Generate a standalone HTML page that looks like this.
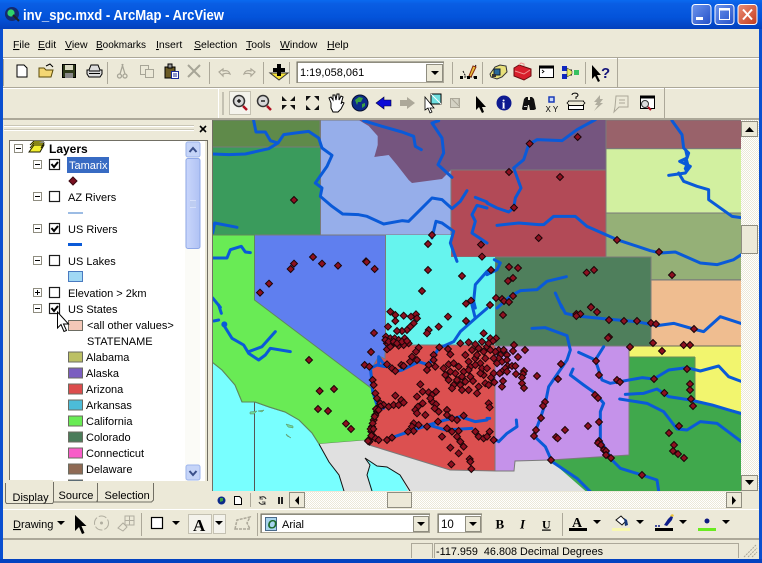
<!DOCTYPE html>
<html><head><meta charset="utf-8"><style>
html,body{margin:0;padding:0;width:762px;height:563px;overflow:hidden;background:#ece9d8}
svg{display:block;position:absolute;left:0;top:0}
text{font-family:"Liberation Sans",sans-serif;font-size:11px;fill:#000}
.mn{font-size:10.500px}
.r{fill:none;stroke:#0a5ad8;stroke-width:9;stroke-linejoin:round;stroke-linecap:round}
.p{fill:none;stroke:none;marker-start:url(#m);marker-mid:url(#m);marker-end:url(#m)}
.c{fill:none;stroke:#000;stroke-width:1.6}
.g{fill:#b0ad9f}
</style></head><body>
<svg width="762" height="563" viewBox="0 0 762 563">
<defs>
<linearGradient id="tb" x1="0" y1="0" x2="0" y2="1"><stop offset="0" stop-color="#0a6af0"/><stop offset=".12" stop-color="#0a5ee4"/><stop offset=".6" stop-color="#0353da"/><stop offset="1" stop-color="#0340bc"/></linearGradient>
<linearGradient id="bb" x1="0" y1="0" x2="1" y2="1"><stop offset="0" stop-color="#6f95ec"/><stop offset="1" stop-color="#2350c8"/></linearGradient>
<linearGradient id="xb" x1="0" y1="0" x2="1" y2="1"><stop offset="0" stop-color="#ec9078"/><stop offset="1" stop-color="#c23a1c"/></linearGradient>
<linearGradient id="sb" x1="0" y1="0" x2="1" y2="0"><stop offset="0" stop-color="#c9d6fb"/><stop offset="1" stop-color="#b0c2f4"/></linearGradient>
<pattern id="dit" width="2" height="2" patternUnits="userSpaceOnUse"><rect width="2" height="2" fill="#fff"/><rect width="1" height="1" fill="#ece9d8"/><rect x="1" y="1" width="1" height="1" fill="#ece9d8"/></pattern>
<marker id="m" markerWidth="30" markerHeight="30" refX="15" refY="15" markerUnits="userSpaceOnUse"><path d="M15 4.500L25.500 15 15 25.500 4.500 15Z" fill="#8d1020" stroke="#1a0508" stroke-width="3"/></marker>
<clipPath id="mc"><rect x="212" y="120" width="529" height="371"/></clipPath>
<clipPath id="tc"><rect x="10" y="141" width="175" height="340"/></clipPath>
</defs>

<!-- window frame -->
<rect width="762" height="563" fill="#0a4fd0"/>
<rect x="3" y="29" width="756" height="530" fill="#ece9d8"/>
<rect width="762" height="29" fill="url(#tb)"/>
<rect y="559" width="762" height="4" fill="#0443c0"/>
<text x="23" y="20" textLength="201" lengthAdjust="spacingAndGlyphs" style="font-size:14.5px;font-weight:bold;fill:#fff">inv_spc.mxd - ArcMap - ArcView</text>
<circle cx="12" cy="14" r="7" fill="#132a70"/><circle cx="11" cy="13" r="3.600" fill="#2fd36a"/><path d="M13 15l6 6" stroke="#222" stroke-width="2"/>
<rect x="692" y="4.500" width="19" height="20" rx="3" fill="url(#bb)" stroke="#fff"/><rect x="696" y="17" width="7" height="3" fill="#fff"/>
<rect x="715" y="4.500" width="19" height="20" rx="3" fill="url(#bb)" stroke="#fff"/><rect x="719.500" y="9.500" width="10" height="10" fill="none" stroke="#fff"/><rect x="719" y="8" width="11" height="2.500" fill="#fff"/>
<rect x="738" y="4.500" width="19" height="20" rx="3" fill="url(#xb)" stroke="#fff"/><path d="M743 9.500l9 10M752 9.500l-9 10" stroke="#fff" stroke-width="2"/>

<!-- menu -->
<g>
<text class="mn" x="13" y="48"><tspan text-decoration="underline">F</tspan>ile</text>
<text class="mn" x="38" y="48"><tspan text-decoration="underline">E</tspan>dit</text>
<text class="mn" x="65" y="48"><tspan text-decoration="underline">V</tspan>iew</text>
<text class="mn" x="96" y="48" textLength="50" lengthAdjust="spacingAndGlyphs"><tspan text-decoration="underline">B</tspan>ookmarks</text>
<text class="mn" x="156" y="48"><tspan text-decoration="underline">I</tspan>nsert</text>
<text class="mn" x="194" y="48"><tspan text-decoration="underline">S</tspan>election</text>
<text class="mn" x="246" y="48"><tspan text-decoration="underline">T</tspan>ools</text>
<text class="mn" x="280" y="48"><tspan text-decoration="underline">W</tspan>indow</text>
<text class="mn" x="327" y="48"><tspan text-decoration="underline">H</tspan>elp</text>
</g>
<rect x="3" y="57" width="756" height="1" fill="#aca899"/><rect x="3" y="58" width="756" height="1" fill="#fff"/>
<rect x="3" y="87" width="756" height="1" fill="#aca899"/><rect x="3" y="88" width="756" height="1" fill="#fff"/>
<rect x="617" y="58" width="1" height="30" fill="#aca899"/>
<rect x="218" y="89" width="1" height="29" fill="#fff"/>
<rect x="664" y="88" width="1" height="30" fill="#aca899"/>
<rect x="3" y="118" width="756" height="2" fill="#aca899"/>
<rect x="3" y="59" width="1" height="27" fill="#aca899"/><rect x="222" y="92" width="2" height="23" fill="#c4c1b2"/>

<!-- main toolbar icons -->
<path d="M17 65h7l3 3v9H17z" fill="#fff" stroke="#000"/>
<path d="M39 76V68h5l2 2h7l-2 7H39z" fill="#f4d774" stroke="#5a4a08"/><path d="M46 66l4-2 3 3" fill="none" stroke="#000"/>
<rect x="62.500" y="64.500" width="13" height="13" fill="#2e3a1a" stroke="#000"/><rect x="65" y="65" width="8" height="5" fill="#d8d8c0"/><rect x="65" y="73" width="8" height="5" fill="#888"/>
<path d="M87 74v-4h2l2-5h7l2 5h2v4l-2 3H89z" fill="#ddd" stroke="#000"/><path d="M89 71h11M89 73.500h11" stroke="#000"/>
<g fill="none" stroke="#a7a597" stroke-width="1.300"><circle cx="119.500" cy="76" r="2"/><circle cx="125" cy="76" r="2"/><path d="M120 74l3-10M125 74l-3-10"/></g>
<g fill="#ece9d8" stroke="#a7a597"><rect x="140.500" y="65.500" width="8" height="9"/><rect x="145.500" y="69.500" width="8" height="8"/></g>
<rect x="165" y="67" width="10" height="11" fill="#6a5a24" stroke="#000"/><rect x="168" y="64" width="4" height="4" fill="#999" stroke="#000"/><rect x="171.500" y="71.500" width="7" height="7" fill="#fff" stroke="#1a2a9a"/><path d="M173 74h4M173 76h4" stroke="#1a2a9a"/>
<path d="M188 65l12 12M200 65l-12 12" stroke="#a7a597" stroke-width="2"/>
<path d="M219 72l4-3v2c4-1 6 0 7 3-2-1-4-1-7 0v2z" fill="none" stroke="#aca899" stroke-width="1.200"/>
<path d="M255 72l-4-3v2c-4-1-6 0-7 3 2-1 4-1 7 0v2z" fill="none" stroke="#aca899" stroke-width="1.200"/>
<rect x="263" y="62" width="1" height="22" fill="#aca899"/><rect x="209" y="62" width="1" height="22" fill="#aca899"/><rect x="107" y="62" width="1" height="22" fill="#aca899"/><rect x="289" y="62" width="1" height="22" fill="#aca899"/>
<path d="M270 73h18l-9 7z" fill="#f4e23a" stroke="#333"/><path d="M277 64h4v4h4v4h-4v4h-4v-4h-4v-4h4z" fill="#000"/>
<!-- scale box -->
<rect x="297.500" y="62.500" width="146" height="20" fill="#fff" stroke="#aca899"/><path d="M297 83V62h147" fill="none" stroke="#716f64"/>
<text x="300" y="76">1:19,058,061</text>
<rect x="426.500" y="64.500" width="16" height="17" fill="#ece9d8" stroke="#8f8d80"/><path d="M431 71h8l-4 4z" fill="#000"/>
<rect x="452" y="62" width="1" height="22" fill="#aca899"/><rect x="482" y="62" width="1" height="22" fill="#aca899"/><rect x="585" y="62" width="1" height="22" fill="#aca899"/>
<path d="M461 77h14M463 71l3 6M476 65l-5 9" stroke="#111" stroke-dasharray="2 1" fill="none"/><path d="M473 66l3 1-5 10-2-1z" fill="#e9c23a" stroke="#8a2a10"/><rect x="460" y="76" width="3" height="3"/><rect x="467" y="76" width="3" height="3"/><rect x="474" y="76" width="3" height="3"/>
<path d="M490 74l5-7 5-2 6 1 1 6-5 5-5 2-6-2z" fill="#e8e07a" stroke="#333"/><rect x="494" y="69" width="6" height="6" fill="#2a6a9a" stroke="#123"/><rect x="492" y="74" width="4" height="3" fill="#333"/>
<path d="M514 68l5-3 3 1 9 3v7l-7 4-10-4z" fill="#d81e2c" stroke="#6a0d10"/><path d="M519 65l2-2 3 1v2M515 71l9 3 6-4" stroke="#f09090" fill="none"/>
<rect x="539.500" y="66.500" width="14" height="11" fill="#fff" stroke="#000"/><rect x="539" y="65.500" width="15" height="3" fill="#000"/><path d="M542 70l2 1.500-2 1.500" stroke="#000" fill="none" stroke-width=".8"/>
<path d="M566 70h6M566 75h6" stroke="#222"/><rect x="562" y="66" width="5" height="5" fill="#1028c0"/><rect x="562" y="74" width="5" height="5" fill="#1028c0"/><path d="M567 68l5 3v3l-5 3z" fill="#eeee60" stroke="#222" stroke-width=".5"/><rect x="574" y="70" width="5" height="5" fill="#38c060"/>
<path d="M592 65v14l3-3 3 6 2-1-3-6 4 0z" fill="#000"/><text x="601" y="78" style="font-size:15px;font-weight:bold;fill:#14147a">?</text>

<!-- second toolbar -->
<rect x="229.500" y="91.500" width="21" height="23" fill="#f4f3ec" stroke="#c4c1b2"/>
<g fill="#d8d8d8" stroke="#333" stroke-width="1.500"><circle cx="239" cy="101" r="5.500"/><circle cx="263" cy="101" r="5.500"/></g>
<path d="M237 101h4M239 99v4M261 101h4" stroke="#000" stroke-width="1.200"/>
<path d="M243 106l4 4M267 106l4 4" stroke="#b01020" stroke-width="2.500"/>
<g fill="#111"><path d="M282 96l5 5h-5zM295 96l-5 5h5zM282 110l5-5h-5zM295 110l-5-5h5z"/><path d="M306 96h5l-5 5zM319 96h-5l5 5zM306 110h5l-5-5zM319 110h-5l5-5z"/></g>
<path d="M331 103l-2-5 2-1 2 3 0-5h2l1 5 1-6 2 0 0 6 2-4 2 1-2 7 1-2 2 1-3 6-3 3h-5l-2-4z" fill="#fff" stroke="#000"/>
<circle cx="360" cy="103" r="8" fill="#0c2a8a" stroke="#061030"/><path d="M355 100l4-3 4 1-2 4-3 0-1 3zM362 104l3-1 0 3-3 2z" fill="#39a044"/>
<path d="M376 103l8-6v3h7v6h-7v3z" fill="#0a0ad8" stroke="#06063a" stroke-width=".6"/>
<path d="M415 103l-8-6v3h-7v6h7v3z" fill="#aca899"/>
<rect x="431" y="94" width="10" height="10" fill="#6fe0e0" stroke="#000"/><path d="M431 94l10 10" stroke="#fff"/><path d="M425 97v13l3-2 2 5 2-1-2-4h4z" fill="#fff" stroke="#000" stroke-width=".8"/>
<rect x="450.500" y="98.500" width="9" height="9" fill="#d4d2c4" stroke="#aca899"/><path d="M452 99l7 7M459 99v5" stroke="#aca899"/>
<path d="M476 96v14l3-3 3 6 2-1-2-5h4z" fill="#000"/>
<circle cx="504" cy="103" r="7.500" fill="#0e1a90"/><text x="501.800" y="108.500" style="font-size:13px;font-weight:bold;fill:#fff;font-family:'Liberation Serif',serif">i</text>
<path d="M522 109l2-10 2-2h2v3h2v-3h2l2 2 2 10-2 1h-4l-1-5-1 0-1 5h-4z" fill="#111"/><rect x="524" y="106" width="3" height="1" fill="#ccc"/>
<rect x="549" y="97" width="5" height="5" fill="#c8d8f8" stroke="#1a3ab8" stroke-width="1.500"/><text x="545.500" y="112" style="font-size:8px;letter-spacing:2px">XY</text>
<path d="M568 104h16M569 104l-2 2 2 2M583 104l2 2-2 2" fill="none" stroke="#000" stroke-width=".8" transform="translate(0,-3)"/><rect x="568.500" y="105.500" width="15" height="4" fill="#fff" stroke="#000"/><path d="M572 95a3 2 0 1 1 4 2l0 2" fill="none" stroke="#000"/>
<path d="M600 95l-6 7 3 0-2 3 3 0-4 6 9-8-3 0 3-4-3 0z" fill="#b0ad9f"/>
<path d="M616 96h12v11h-9l-5 5 1-5z" fill="#ece9d8" stroke="#aca899"/><path d="M619 100h6M619 103h6" stroke="#aca899"/>
<rect x="640.500" y="96.500" width="14" height="12" fill="#fff" stroke="#000"/><rect x="640" y="95.500" width="15" height="3" fill="#000"/><circle cx="645" cy="104" r="3.500" fill="#ddd" stroke="#333"/><path d="M648 107l3 3" stroke="#b01020" stroke-width="2"/>

<!-- MAP -->
<g clip-path="url(#mc)">
<rect x="212" y="120" width="529" height="371" fill="#78ffff"/>
<g stroke="#7a7a7a" stroke-width="1">
<rect x="212" y="120" width="108" height="27" fill="#5f8a4a"/>
<rect x="212" y="147" width="108.500" height="88" fill="#3a9b5c"/>
<rect x="320.500" y="120" width="131" height="115" fill="#96aeea"/>
<path d="M358.700 120L368.700 126 377.700 136V145L374.300 157 388.700 155 397 165 408.700 180 412 183 442 179 451 170H606V120Z" fill="#75557f" stroke="none"/>
<rect x="606" y="120" width="136" height="28.700" fill="#99626a"/>
<rect x="606" y="148.700" width="136" height="64.300" fill="#d2f0a0"/>
<path d="M606 213H742V279.700H651V257H606Z" fill="#95b077"/>
<rect x="451" y="170" width="155" height="87" fill="#b24a57"/>
<rect x="495" y="257" width="156" height="89" fill="#4f7f5c"/>
<path d="M385.500 235H451V257H495V346H385.500Z" fill="#66f4ee" stroke="none"/>
<path d="M254.500 235H385.500V345L385 359 379 356 372 368 371 388 258 305 254.500 300Z" fill="#5f7fef"/>
<path d="M212 235H254.500V300L371 388 377 405 369 440 319 444 312 433 299 420 285 412 269 407 255 402 242 402 235 385 222 370 212 362Z" fill="#69eb55" stroke="#5f8a5a"/>
<path d="M651 280H742V346H651Z" fill="#efbd90"/>
<path d="M319 444L369 440 370 445 450 470 495 471H514L515 461 550 460 590 495H344L339 475 329 462Z" fill="#e0e0e0" stroke="none"/>
<path d="M385.500 345H495V471L450 470 369 445 377 405 371 388 372 368 379 356 385 359Z" fill="#dc5050"/>
<path d="M629 346H742V412L695 400V357H629Z" fill="#f2f56e" stroke="none"/>
<path d="M629 357H695V400L742 412V495H590L550 460 629 455Z" fill="#40a84c" stroke="none"/>
<path d="M695 357V400M629 357H695" fill="none" stroke="#6a8a5a"/>
<path d="M495 346H629V455L550 460 515 461 514 471H495Z" fill="#c592ea"/>
<path d="M742 346H629" stroke="#6a6a5a" fill="none"/>
</g>
<path d="M365 458L370 465 367 475 372 495H410L400 475 387 467 377 466Z" fill="#78ffff" stroke="none"/>
<g fill="none" stroke="#111" stroke-width="1"><path d="M319 444L329 462 339 475 344 491"/><path d="M372 491L367 475 370 465 365 458 377 466 387 467 400 475 410 491"/></g>
<path d="M254.500 402V491" stroke="#555" stroke-width="1"/>
<path d="M212 362L222 370 235 385 242 402 255 402 269 407 285 412 299 420 312 433 319 444" fill="none" stroke="#5f8a5a"/>
<g fill="#6ad89a" stroke="#5f8a5a" stroke-width=".5"><path d="M250 412l7-1-3 3-4 0zM258 411l6-1-2 2zM286 424l7 2 0 2-5-1zM286 434l5 4-4-2z"/></g>

<g transform="translate(212,118) scale(.33333)" >
<path class="r" d="M125,8 L132,42 L160,42 L175,68 L198,75 L215,50 L250,45 L290,40 L320,60 L330,90 L360,112 L345,145 L310,195 L330,210 L325,235 L360,265 L392,288 L440,290 L465,295 L515,318 L570,308 L590,310 L625,275 L660,240 L690,245 L720,272 L745,250 L765,218"/>
<path class="r" d="M2,108 L50,110 L100,108 L170,92 L198,75M2,345 L8,315 L75,328M2,420 L45,420 L55,395 L88,385 L100,402 L115,404M2,540 L25,568"/>
<path class="r" d="M455,8 L510,25 L570,42 L605,55 L610,85 L628,95M680,8 L660,15 L690,60 L695,105 L678,140 L720,178M790,238 L825,252M825,270 L795,262 L780,290 L790,310 L780,345 L825,375M660,360 L672,310 L690,315 L725,340 L715,375 L735,430M825,460 L790,500 L785,550 L790,570"/>
<polyline class="p" points="246,246 303,417 246,437 236,453 330,437 378,443 462,430 464,432 488,453 171,497 144,524 660,351 648,378 648,456 750,474 630,519 777,548 762,557 807,380 810,416"/>
</g>
<g transform="translate(487,118) scale(.33333)">
<path class="r" d="M325,5 L270,35 L225,68 L150,65 L125,80 L110,125 L80,150 L102,210 L85,240 L80,270 L65,282 L30,270 L0,255M30,322 L95,315 L155,320 L170,320 L200,295 L265,295 L300,325 L390,365 L490,398 L520,405 L565,402 L640,435 L690,440 L740,425 L770,405"/>
<path class="r" d="M555,8 L585,50 L590,90 L605,105 L600,120 L578,130 L610,145 L595,165 L545,172M575,165 L590,190 L630,205 L665,215 L665,245 L735,295 L770,300M238,476 L180,490 L150,515 L100,518 L70,535 L30,570M205,525 L225,570M22,425 L40,435 L30,455 L0,470"/>
<path d="M592 98l12 8-2 16 6 22-12 20-6-12 6-14-8-12 8-10z" fill="#0a5ad8"/>
<polyline class="p" points="272,57 128,77 66,162 219,177 81,269 155,360 390,366 516,402 555,471 12,456 66,447 93,450 78,480 63,489 299,464 321,456 78,534 27,540 45,543 51,549 66,552 9,561 312,567"/>
</g>
<g transform="translate(212,305) scale(.33333)">
<path class="r" d="M20,0 L28,25M5,48 L20,45M35,60 L60,100 L95,120 L110,145 L140,165 L160,150 L175,130 L235,140M110,140 L150,125 L190,80M478,215 L475,190 L495,180 L520,185 L500,155 L500,175M478,215 L482,260 L495,300 L515,310"/>
<path class="r" d="M825,10 L790,40 L745,80 L725,110 L680,130 L650,180 L620,170 L570,195 L550,200 L520,175M520,405 L590,380 L650,360 L700,375 L780,370M650,360 L700,345 L745,335 L790,350 L825,345M780,0 L790,40" />
<path d="M28 58a9 9 0 1 0 18 0a9 9 0 1 0-18 0" fill="#0a5ad8"/>
<polyline class="p" points="535,20 550,30 575,32 597,35 612,28 615,40 550,48 528,65 605,55 595,65 585,75 570,78 555,78 708,35 680,65 650,75 645,85 762,48 486,84 815,85 522,95 535,100 548,100 560,105 578,100 590,115 525,115 540,120 560,122 575,120 525,133 535,125 520,105 530,110 545,110 555,115 570,110 585,108 620,128 612,140 600,155 615,165 682,127 708,132 715,148 745,115 770,112 790,118 810,110 825,125 800,130 815,140 760,150 770,170 790,160 805,175 820,160 780,135 795,150 775,185 790,180 665,150 665,165 650,180 645,195 670,185 695,190 710,178 725,175 740,185 700,210 710,225 725,240 720,250 735,225 755,200 770,195 750,215 745,240 750,255 770,255 783,228 800,245 795,265 810,190 825,190 815,210 820,235 805,205 730,205 715,200 760,230 775,215 477,141 458,180 472,185 525,178 540,190 550,198 568,180 575,183 594,170 482,225 485,240 490,265 495,280 505,295 515,300 530,305 545,300 550,272 568,285 575,293 560,300 625,238 632,260 650,262 660,270 672,260 615,275 632,295 618,305 610,315 615,325 640,330 660,290 672,298 680,320 678,350 668,310 655,280 705,315 705,330 720,340 735,345 755,332 605,355 600,365 620,360 645,365 605,378 588,380 690,395 705,370 720,380 740,378 735,395 745,410 755,425 715,428 740,445 773,462 775,470 718,478 778,492 790,380 800,395 815,400 825,395 495,320 490,330 485,345 480,365 478,380 485,395 472,410 490,400 500,405 525,405 540,398 505,305 495,310 488,335 482,355 476,372 470,405 484,372 492,312 500,315 478,392 468,408 291,165 323,258 366,252 318,312 348,318 402,356 417,372"/>
</g>
<g transform="translate(487,305) scale(.33333)">
<path class="r" d="M222,0 L235,25 L270,33 L360,42 L450,50 L510,62 L560,55 L620,72 L650,80 L700,35 L770,58M135,70 L175,68 L240,92 L250,135 L240,165 L185,245 L175,295 L160,340 L140,392 L175,425 L195,470 L270,520 L310,560M275,142 L325,165 L345,225 L370,235 L465,218 L500,222 L545,195 L600,188 L640,198 L695,183 L725,215 L770,232M350,125 L325,165"/>
<path class="r" d="M258,192 L250,210 L290,240 L325,265 L350,295 L340,320 L340,405 L375,465 L400,490 L465,510 L510,525 L515,558M415,268 L470,265 L510,252 L545,275 L610,285 L675,300 L725,315 L770,328M398,282 L480,295 L530,320 L570,372 L600,375 L640,350 L690,355 L770,415M88,345 L90,365 L60,385 L35,410 L20,400M0,340 L8,340"/>
<polyline class="p" points="48,30 312,7 330,21 268,27 280,27 268,33 366,45 411,48 450,48 492,54 507,57 621,72 366,96 363,99 498,114 429,126 525,138 590,120 609,120 81,120 114,135 93,156 10,100 27,100 18,108 5,115 35,135 50,135 78,138 25,140 10,135 40,150 60,150 35,160 20,160 45,170 60,165 30,175 62,183 75,183 85,183 55,190 45,200 20,205 38,205 60,200 87,207 111,198 108,207 150,213 105,218 105,235 111,249 45,245 12,218 5,240 22,232 48,228 222,177 213,222 327,168 336,210 390,225 399,231 501,222 600,192 609,237 609,255 612,282 618,303 532,264 324,270 333,279 174,291 168,303 162,339 147,375 141,393 234,375 303,363 336,351 207,396 212,400 336,408 333,414 342,420 351,435 357,438 357,450 372,459 192,465 465,510 576,363 546,384 561,420 558,438 573,447 591,459 5,295 8,307 8,380 20,405"/>
</g>
</g>

<!-- map scrollbars -->
<rect x="741" y="120" width="18" height="371" fill="url(#dit)"/>
<rect x="741.500" y="121.500" width="16" height="15" fill="#ece9d8" stroke="#8f8d80"/><path d="M745 132h9l-4.500-5z" fill="#000"/>
<rect x="741.500" y="225.500" width="16" height="28" fill="#ece9d8" stroke="#8f8d80"/>
<rect x="741.500" y="475.500" width="16" height="15" fill="#ece9d8" stroke="#8f8d80"/><path d="M745 480h9l-4.500 5z" fill="#000"/>
<rect x="212" y="491" width="530" height="18" fill="#ece9d8"/>
<rect x="304" y="492" width="423" height="16" fill="url(#dit)"/>
<rect x="289.500" y="492.500" width="15" height="15" fill="#ece9d8" stroke="#8f8d80"/><path d="M299 496v9l-4-4.500z" fill="#000"/>
<rect x="387.500" y="492.500" width="24" height="15" fill="#ece9d8" stroke="#8f8d80"/>
<rect x="726.500" y="492.500" width="15" height="15" fill="#ece9d8" stroke="#8f8d80"/><path d="M732 496v9l4-4.500z" fill="#000"/>
<circle cx="221.500" cy="500.500" r="4" fill="#0c2a8a"/><path d="M220 498l3 0 0 3-3 1z" fill="#39a044"/>
<path d="M234.500 496.500h5l2 2v6h-7z" fill="#fff" stroke="#000"/>
<rect x="250" y="493" width="1" height="14" fill="#aca899"/>
<path d="M266 499a3.500 3.500 0 0 0-6-1M259 502a3.500 3.500 0 0 0 6 1" fill="none" stroke="#222"/><path d="M260 496v3h3M265 505v-3h-3" fill="none" stroke="#222" stroke-width=".7"/>
<rect x="278" y="497" width="2" height="7" fill="#222"/><rect x="281" y="497" width="2" height="7" fill="#222"/>

<!-- left panel -->
<rect x="3" y="120" width="209" height="389" fill="#ece9d8"/>
<g fill="#c9c6b6"><rect x="4" y="125" width="190" height="1"/><rect x="4" y="129" width="190" height="1"/></g>
<g fill="#fff"><rect x="4" y="126" width="190" height="1"/><rect x="4" y="130" width="190" height="1"/></g>
<path d="M200 126l6 6M206 126l-6 6" stroke="#000" stroke-width="1.600"/>
<rect x="9.500" y="140.500" width="198" height="341" fill="#fff" stroke="#716f64"/>
<rect x="205" y="141" width="2" height="340" fill="#ece9d8"/>
<!-- tree scrollbar -->
<rect x="185" y="141" width="15" height="340" fill="#fbfbf7"/>
<rect x="186" y="142" width="14" height="15" rx="2" fill="#c5d4f8" stroke="#9db4ec"/><path d="M189.500 152l3.500-4 3.500 4" fill="none" stroke="#3a4f8a" stroke-width="2"/>
<rect x="186" y="158.500" width="14" height="90" rx="2" fill="url(#sb)" stroke="#8fa8e8"/><path d="M190 201h6M190 203h6M190 205h6M190 207h6" stroke="#eef2fd"/><path d="M190 202h6M190 204h6M190 206h6" stroke="#8fa8e8"/>
<rect x="186" y="465" width="14" height="15" rx="2" fill="#c5d4f8" stroke="#9db4ec"/><path d="M189.500 471l3.500 4 3.500-4" fill="none" stroke="#3a4f8a" stroke-width="2"/>

<g clip-path="url(#tc)">
<text x="49" y="153" style="font-size:12px;font-weight:bold">Layers</text>
<path d="M29 152l5-7h10l-4 7zM30 148l4-5h10l-3 5M30 145l4-4h10" fill="#f2ee30" stroke="#1e1e00"/>
<rect x="67" y="157" width="42" height="16" fill="#386bc3"/>
<g>
<text x="69" y="169" style="fill:#fff">Tamarix</text>
<text x="68" y="201">AZ Rivers</text>
<text x="68" y="233">US Rivers</text>
<text x="68" y="265">US Lakes</text>
<text x="68" y="297">Elevation &gt; 2km</text>
<text x="68" y="313">US States</text>
<text x="87" y="329">&lt;all other values&gt;</text>
<text x="87" y="345">STATENAME</text>
<text x="86" y="361">Alabama</text>
<text x="86" y="377">Alaska</text>
<text x="86" y="393">Arizona</text>
<text x="86" y="409">Arkansas</text>
<text x="86" y="425">California</text>
<text x="86" y="441">Colorado</text>
<text x="86" y="457">Connecticut</text>
<text x="86" y="473">Delaware</text>
<text x="86" y="489">District of Columbia</text>
</g>
<path d="M73 177l4 4-4 4-4-4z" fill="#7a1020" stroke="#3a0810"/>
<rect x="68" y="212.500" width="15" height="1" fill="#3a7ac8"/>
<rect x="68" y="243" width="14" height="3" fill="#0a5ad8"/>
<rect x="68.500" y="271.500" width="14" height="10" fill="#a0d8f4" stroke="#4a7ac0"/>
<g stroke="#6c6c62">
<rect x="68.500" y="320.500" width="14" height="10" fill="#f4c8b8"/>
<rect x="68.500" y="352" width="14" height="10" fill="#bcc064"/>
<rect x="68.500" y="368" width="14" height="10" fill="#7b5ec0"/>
<rect x="68.500" y="384" width="14" height="10" fill="#dc4c4c"/>
<rect x="68.500" y="400" width="14" height="10" fill="#4cbcd8"/>
<rect x="68.500" y="416" width="14" height="10" fill="#68ec54"/>
<rect x="68.500" y="432" width="14" height="10" fill="#4a7c5a"/>
<rect x="68.500" y="448" width="14" height="10" fill="#f85cc8"/>
<rect x="68.500" y="464" width="14" height="10" fill="#8f6a54"/>
<rect x="68.500" y="480" width="14" height="10" fill="#4a6a88"/>
</g>
<g fill="#fff" stroke="#8f8d80">
<rect x="14.500" y="144.500" width="8" height="8"/>
<rect x="33.500" y="160.500" width="8" height="8"/>
<rect x="33.500" y="192.500" width="8" height="8"/>
<rect x="33.500" y="224.500" width="8" height="8"/>
<rect x="33.500" y="256.500" width="8" height="8"/>
<rect x="33.500" y="288.500" width="8" height="8"/>
<rect x="33.500" y="304.500" width="8" height="8"/>
</g>
<path d="M16 148.500h5M35 164.500h5M35 196.500h5M35 228.500h5M35 260.500h5M35 292.500h5M37.500 290v5M35 308.500h5" stroke="#000"/>
<g fill="#fff" stroke="#1c1c1c" stroke-width="1.200">
<rect x="49.500" y="159.500" width="10" height="10"/>
<rect x="49.500" y="191.500" width="10" height="10"/>
<rect x="49.500" y="223.500" width="10" height="10"/>
<rect x="49.500" y="255.500" width="10" height="10"/>
<rect x="49.500" y="287.500" width="10" height="10"/>
<rect x="49.500" y="303.500" width="10" height="10"/>
</g>
<path d="M51.500 164l2.500 3 4-5M51.500 228l2.500 3 4-5M51.500 308l2.500 3 4-5" fill="none" stroke="#000" stroke-width="2"/>
</g>
<path d="M57.500 312v16l3.500-3.500 3 7 2.500-1-3-6.500h5z" fill="#fff" stroke="#000"/>

<!-- tabs -->
<rect x="9" y="481" width="199" height="2" fill="#ece9d8"/>
<path d="M53.500 483v19h43l1-2v-17" fill="#ece9d8" stroke="#716f64"/>
<path d="M97.500 483v19h54l2-2v-17" fill="#ece9d8" stroke="#716f64"/>
<path d="M5.500 483v19l1 1.500h46l1-1.500v-20" fill="#ece9d8" stroke="#716f64"/>
<rect x="6" y="480" width="47" height="3" fill="#ece9d8"/>
<text x="12.500" y="501">Display</text>
<text x="58.500" y="499">Source</text>
<text x="104.500" y="499">Selection</text>
<rect x="212" y="120" width="1" height="371" fill="#716f64"/>

<!-- bottom toolbar -->
<rect x="3" y="509" width="756" height="1" fill="#fff"/>
<rect x="3" y="538" width="756" height="2" fill="#aca899"/>
<text x="13" y="528"><tspan text-decoration="underline">D</tspan>rawing</text>
<path d="M57 521h8l-4 4z" fill="#000"/>
<path d="M75 515v16l4-4 3 7 2.500-1-3-7h5z" fill="#000"/>
<circle cx="101.500" cy="523" r="7" fill="none" stroke="#b0ad9f" stroke-dasharray="8 2"/><circle cx="101.500" cy="523" r="1.500" fill="#b0ad9f"/>
<rect x="125" y="516" width="9" height="9" fill="#ece9d8" stroke="#b0ad9f"/><path d="M129.500 516v9M125 520.500h9M118 528l5-5 4 4-4 4z" stroke="#b0ad9f" fill="#ece9d8"/>
<rect x="141" y="513" width="1" height="23" fill="#aca899"/><rect x="257" y="513" width="1" height="23" fill="#aca899"/>
<rect x="151.500" y="517.500" width="11" height="11" fill="#fff" stroke="#000" stroke-width="1.200"/>
<path d="M172 521h8l-4 4z" fill="#000"/>
<rect x="188.500" y="514.500" width="23" height="19" fill="#f4f3ec" stroke="#c4c1b2"/><text x="193" y="531" style="font-size:17px;font-weight:bold;font-family:'Liberation Serif',serif">A</text>
<rect x="213.500" y="514.500" width="12" height="19" fill="#f4f3ec" stroke="#c4c1b2"/><path d="M215 521h8l-4 4z" fill="#000"/>
<path d="M235 529l2-9 13-3-3 6 3 6z" fill="none" stroke="#aca899" stroke-width="1.500" stroke-dasharray="3 1"/>
<rect x="261.500" y="514.500" width="168" height="18" fill="#fff" stroke="#aca899"/><path d="M261 533V514h169" fill="none" stroke="#716f64"/>
<rect x="265.500" y="517.500" width="11" height="13" fill="#a8d4ee" stroke="#4a6a8a"/><text x="267.500" y="528.500" style="font-size:12px;font-weight:bold;font-style:italic;fill:#1a6a2a">O</text>
<text x="282" y="528">Arial</text>
<rect x="413.500" y="516.500" width="15" height="15" fill="#ece9d8" stroke="#8f8d80"/><path d="M417 522h8l-4 4z" fill="#000"/>
<rect x="438.500" y="514.500" width="43" height="18" fill="#fff" stroke="#aca899"/><path d="M438 533V514h44" fill="none" stroke="#716f64"/>
<text x="441" y="528" style="font-size:11.500px">10</text>
<rect x="465.500" y="516.500" width="15" height="15" fill="#ece9d8" stroke="#8f8d80"/><path d="M469 522h8l-4 4z" fill="#000"/>
<text x="495.500" y="528.500" style="font-family:'Liberation Serif',serif;font-size:13px;font-weight:bold">B</text>
<text x="520" y="528.500" style="font-family:'Liberation Serif',serif;font-size:13px;font-weight:bold;font-style:italic">I</text>
<text x="542" y="528.500" style="font-family:'Liberation Serif',serif;font-size:12px;font-weight:bold;text-decoration:underline">U</text>
<rect x="562" y="513" width="1" height="23" fill="#aca899"/>
<text x="572" y="527" style="font-family:'Liberation Serif',serif;font-size:14px;font-weight:bold">A</text>
<rect x="569" y="528" width="18" height="3" fill="#000"/>
<path d="M593 520h8l-4 4zM636 520h8l-4 4zM679 520h8l-4 4zM722 520h8l-4 4z" fill="#000"/>
<path d="M616 520l5-4 5 5-4 4z" fill="#fff" stroke="#111"/><path d="M624 518l3 2 1 5-3 1z" fill="#183a7a"/>
<rect x="612" y="528" width="18" height="3" fill="#f8f8b0"/>
<path d="M664 525l4-6 3-3 2 1-1 3-5 6z" fill="#0e1e8a"/><path d="M670 516l2-2 2 1-1 2z" fill="#e9c23a"/><path d="M655 526h6" stroke="#0e1e8a" stroke-width="1.500" stroke-dasharray="2 1"/>
<rect x="655" y="528" width="18" height="3" fill="#000"/>
<circle cx="707" cy="521" r="2.500" fill="#0e1a80"/>
<rect x="698" y="528" width="18" height="3" fill="#69eb20"/>

<!-- status bar -->
<path d="M411.500 558V543.500h21V558M434.500 558V543.500h304V558" fill="none" stroke="#aca899"/>
<text x="436" y="555" xml:space="preserve" textLength="167" lengthAdjust="spacingAndGlyphs">-117.959  46.808 Decimal Degrees</text>
<path d="M748 557l9-9M752 557l5-5M744 557l12-12" stroke="#aca899" stroke-dasharray="2 1"/>
</svg>
</body></html>
